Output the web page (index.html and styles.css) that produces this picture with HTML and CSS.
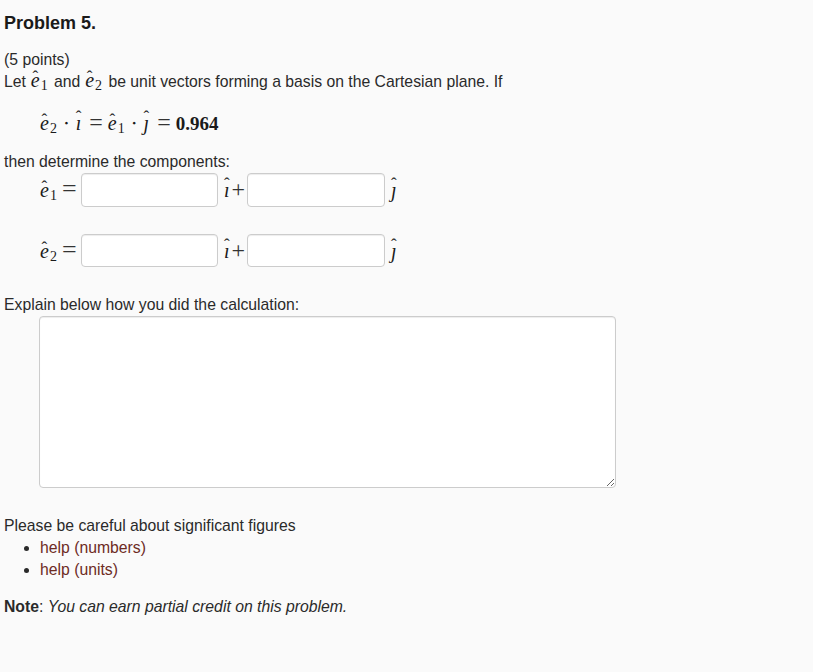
FILE: index.html

```html
<!DOCTYPE html>
<html lang="en">
<head>
    <meta charset="UTF-8">
    <meta name="viewport" content="width=device-width, initial-scale=1.0">
    <title>Problem 5</title>
    <link rel="stylesheet" href="styles.css">
</head>
<body>
    <div class="problem">
        <h3 class="problem-title">Problem 5.</h3>
        <div class="text-line">(5 points)</div>
        <div class="text-line">Let <span class="math inline-math"><span class="hat">e</span><sub>1</sub></span> and <span class="math inline-math"><span class="hat">e</span><sub>2</sub></span> be unit vectors forming a basis on the Cartesian plane. If</div>

        <div class="math equation">
            <span class="term"><span class="hat">e</span><sub>2</sub></span>
            <span class="dot">⋅</span>
            <span class="hat hat-tall">ı</span>
            <span class="eq">=</span>
            <span class="term"><span class="hat">e</span><sub>1</sub></span>
            <span class="dot">⋅</span>
            <span class="hat hat-tall">ȷ</span>
            <span class="eq">=</span>
            <span class="value">0.964</span>
        </div>

        <div class="text-line">then determine the components:</div>

        <div class="answer-row">
            <span class="math answer-label"><span class="hat">e</span><sub>1</sub><span class="eq">=</span></span>
            <input class="answer" type="text">
            <span class="math unit"><span class="hat hat-tall">ı</span><span class="plus">+</span></span>
            <input class="answer answer-wide" type="text">
            <span class="math unit unit-last"><span class="hat hat-tall">ȷ</span></span>
        </div>
        <div class="answer-row answer-row-second">
            <span class="math answer-label"><span class="hat">e</span><sub>2</sub><span class="eq">=</span></span>
            <input class="answer" type="text">
            <span class="math unit"><span class="hat hat-tall">ı</span><span class="plus">+</span></span>
            <input class="answer answer-wide" type="text">
            <span class="math unit unit-last"><span class="hat hat-tall">ȷ</span></span>
        </div>

        <div class="text-line explain-label">Explain below how you did the calculation:</div>
        <textarea class="explain"></textarea>

        <div class="text-line careful">Please be careful about significant figures</div>
        <ul class="help-list">
            <li><a href="#">help (numbers)</a></li>
            <li><a href="#">help (units)</a></li>
        </ul>

        <p class="note"><b>Note</b>: <i>You can earn partial credit on this problem.</i></p>
    </div>
</body>
</html>
```

FILE: styles.css

```css
body {
    font-family: 'Liberation Sans', Arial, sans-serif;
    font-size: 15.75px;
    line-height: 22px;
    margin: 0;
    padding: 0 4px;
    color: #2a2a2a;
    background-color: #fafafa;
}
.problem-title {
    font-size: 18px;
    font-weight: bold;
    line-height: 22px;
    margin: 0;
    padding-top: 12px;
    margin-bottom: 15px;
    color: #1a1a1a;
}
.math {
    font-family: 'Liberation Serif', 'DejaVu Serif', serif;
    font-size: 20px;
    color: #1a1a1a;
}
.math sub {
    font-size: 14px;
    line-height: 0;
    vertical-align: -3px;
    margin-left: 1px;
}
.inline-math {
    line-height: 0;
    margin: 0 2px 0 0.5px;
}
.hat {
    position: relative;
    display: inline-block;
    line-height: 22px;
    font-style: italic;
}
.inline-math .hat {
    line-height: 14px;
}
.hat::before {
    content: "ˆ";
    position: absolute;
    left: 0;
    right: 0;
    top: -3px;
    text-align: center;
    font-style: normal;
    font-size: 17px;
}
.inline-math .hat::before {
    line-height: 22px;
    top: -7px;
}
.hat-tall::before {
    top: -6px;
}
.eq {
    font-size: 24px;
    line-height: 0;
    color: #333;
}
.dot {
    margin: 0 6px;
}
.equation {
    display: flex;
    align-items: baseline;
    padding-left: 36px;
    margin-top: 19px;
    margin-bottom: 17px;
    height: 22px;
}
.equation .eq {
    margin: 0 5px 0 8px;
}
.value {
    font-size: 19px;
    font-weight: bold;
}
.answer-row {
    display: flex;
    align-items: center;
    height: 34px;
}
.answer-row-second {
    height: 33px;
    margin-top: 27px;
}
.answer-label {
    width: 77px;
    padding-left: 36px;
    box-sizing: border-box;
    white-space: nowrap;
}
.answer-label .eq {
    font-size: 26px;
    margin-left: 5px;
}
.answer {
    width: 137px;
    height: 100%;
    box-sizing: border-box;
    padding: 4px 6px;
    font-size: 14px;
    border: 1px solid #ccc;
    border-radius: 4px;
    background-color: #fff;
    box-shadow: inset 0 1px 1px rgba(0, 0, 0, 0.075);
}
.answer-wide {
    width: 138px;
}
.unit {
    display: flex;
    align-items: baseline;
    width: 29px;
    box-sizing: border-box;
    padding-left: 6px;
}
.plus {
    font-size: 24px;
    line-height: 0;
    margin-left: 2px;
    color: #333;
}
.explain-label {
    margin-top: 27px;
}
.explain {
    display: block;
    width: 577px;
    height: 172px;
    box-sizing: border-box;
    margin: 0 0 0 35px;
    padding: 4px 6px;
    border: 1px solid #ccc;
    border-radius: 4px;
    background-color: #fff;
    box-shadow: inset 0 1px 1px rgba(0, 0, 0, 0.075);
}
.careful {
    margin-top: 27px;
}
.help-list {
    margin: 0;
    padding-left: 36px;
}
.help-list a {
    color: #6d2b1f;
    text-decoration: none;
}
.note {
    margin: 15px 0 0;
}
```
